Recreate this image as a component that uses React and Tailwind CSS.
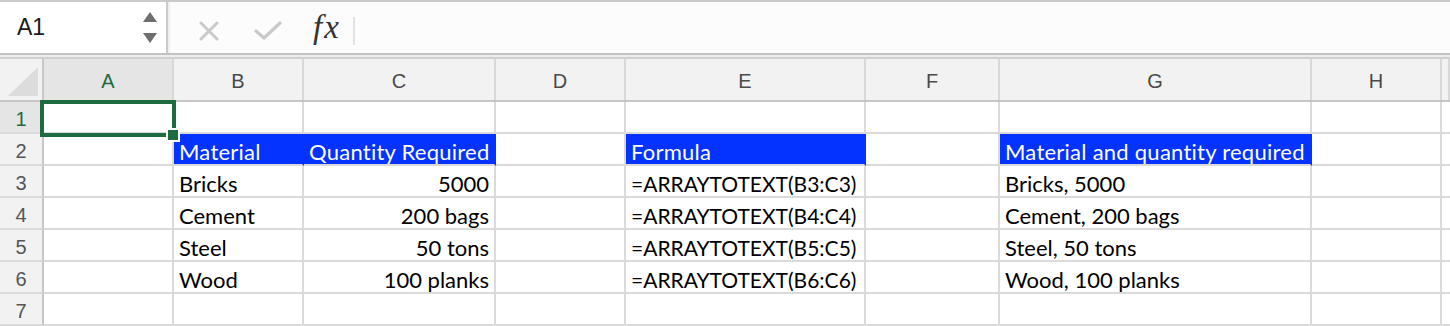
import React from 'react';

const COLS = [
  { id: 'A', w: 'w-[130px]' },
  { id: 'B', w: 'w-[130px]' },
  { id: 'C', w: 'w-[192px]' },
  { id: 'D', w: 'w-[130px]' },
  { id: 'E', w: 'w-[240px]' },
  { id: 'F', w: 'w-[134px]' },
  { id: 'G', w: 'w-[312px]' },
  { id: 'H', w: 'w-[130px]' },
  { id: '', w: 'w-[8px]' },
];

const BLUE = 'bg-[#0433ff] text-white border-r-[#0433ff] tracking-[0.25px]';

// one entry per row, keyed by column letter
const ROWS = [
  {},
  {
    B: { t: 'Material', blue: true },
    C: { t: 'Quantity Required', blue: true },
    E: { t: 'Formula', blue: true },
    G: { t: 'Material and quantity required', blue: true },
  },
  { B: { t: 'Bricks' }, C: { t: '5000', right: true }, E: { t: '=ARRAYTOTEXT(B3:C3)', f: true }, G: { t: 'Bricks, 5000' } },
  { B: { t: 'Cement' }, C: { t: '200 bags', right: true }, E: { t: '=ARRAYTOTEXT(B4:C4)', f: true }, G: { t: 'Cement, 200 bags' } },
  { B: { t: 'Steel' }, C: { t: '50 tons', right: true }, E: { t: '=ARRAYTOTEXT(B5:C5)', f: true }, G: { t: 'Steel, 50 tons' } },
  { B: { t: 'Wood' }, C: { t: '100 planks', right: true }, E: { t: '=ARRAYTOTEXT(B6:C6)', f: true }, G: { t: 'Wood, 100 planks' } },
  {},
];

function FormulaBar() {
  return (
    <div>
      <div className="h-[2px] bg-[#c9c9c9]" />
      <div className="flex h-[51px] bg-white">
        <div className="w-[166px] flex items-center justify-between pl-[17px] pr-[9px]">
          <span className="text-[23px] text-[#1a1a1a] font-['Liberation_Sans',sans-serif] leading-none">A1</span>
          <svg width="14" height="32" viewBox="0 0 14 32" className="mt-[1px]">
            <path d="M7 0 L14 10 L0 10 Z" fill="#6e6e6e" />
            <path d="M0 21 L14 21 L7 31 Z" fill="#6e6e6e" />
          </svg>
        </div>
        <div className="w-[2px] bg-[#cbcbcb]" />
        <div className="w-[2px] bg-[#efefef]" />
        <div className="flex-1 flex items-center bg-[#fcfcfc]">
          <div className="flex items-center pl-[29px] pt-[7px]">
            <svg width="20" height="20" viewBox="0 0 20 20">
              <path d="M2 2 L18 18 M18 2 L2 18" stroke="#c9c9c9" strokeWidth="3" strokeLinecap="round" />
            </svg>
            <svg width="28" height="20" viewBox="0 0 28 20" className="ml-[35px]">
              <path d="M2 10 L10 17 L26 2" stroke="#c9c9c9" strokeWidth="3.2" fill="none" strokeLinecap="round" strokeLinejoin="round" />
            </svg>
            <span className="ml-[31px] -mt-[8px] text-[33px] tracking-[2px] italic text-[#333] font-['Liberation_Serif',serif] leading-none">fx</span>
          </div>
          <div className="ml-[12px] mt-[6px] w-[2px] h-[28px] bg-[#e2e2e2]" />
        </div>
      </div>
      <div className="h-[2px] bg-[#c2c2c2]" />
      <div className="h-[2px] bg-[#ededed]" />
      <div className="h-[2px] bg-[#d0d0d0]" />
    </div>
  );
}

function HeaderRow() {
  return (
    <div className="flex h-[43px] bg-[#f2f2f2] border-b-2 border-[#c6c6c6]">
      <div className="w-[44px] shrink-0 border-r-2 border-[#c8c8c8] relative">
        <svg width="44" height="41" className="absolute left-0 top-0">
          <path d="M8 37 L38 8 L38 37 Z" fill="#dcdcdc" />
        </svg>
      </div>
      {COLS.map((c) => (
        <div
          key={c.id || 'x'}
          className={`${c.w} shrink-0 border-r-2 border-[#d8d8d8] flex items-center justify-center pt-[3px] text-[20px] font-['Liberation_Sans',sans-serif] ${c.id === 'A' ? 'bg-[#e5e5e5] text-[#1e6b41]' : 'text-[#4a4a4a]'}`}
        >
          {c.id}
        </div>
      ))}
    </div>
  );
}

function Row({ n, data }) {
  return (
    <div className="flex h-[32px]">
      <div
        className={`w-[44px] shrink-0 border-r-2 border-r-[#c6c6c6] border-b-2 border-b-[#dadada] flex items-center justify-center pt-[4px] text-[20px] font-['Liberation_Sans',sans-serif] ${n === 1 ? 'bg-[#e5e5e5] text-[#1e6b41]' : 'bg-[#f2f2f2] text-[#555]'}`}
      >
        {n}
      </div>
      {COLS.map((c) => {
        const cell = data[c.id];
        return (
          <div
            key={c.id || 'x'}
            className={`${c.w} shrink-0 border-r-2 border-b-2 border-[#dadada] flex items-end overflow-hidden whitespace-nowrap px-[5px] leading-[24px] font-['Lato',sans-serif] ${cell && cell.f ? 'text-[21px]' : 'text-[22px]'} ${cell && cell.blue ? BLUE : 'bg-white text-black'} ${cell && cell.right ? 'justify-end' : ''}`}
          >
            {cell ? cell.t : ''}
          </div>
        );
      })}
    </div>
  );
}

export default function App() {
  return (
    <div className="w-[1450px] h-[326px] overflow-hidden bg-white">
      <FormulaBar />
      <div className="relative">
        <HeaderRow />
        {ROWS.map((r, i) => (
          <Row key={i} n={i + 1} data={r} />
        ))}
        {/* active cell A1 */}
        <div className="absolute left-[40px] top-[41px] w-[136px] h-[37px] border-4 border-[#1e6b41]" />
        <div className="absolute left-[166px] top-[69px] w-[14px] h-[14px] bg-white" />
        <div className="absolute left-[168px] top-[71px] w-[10px] h-[10px] bg-[#1e6b41]" />
      </div>
    </div>
  );
}
